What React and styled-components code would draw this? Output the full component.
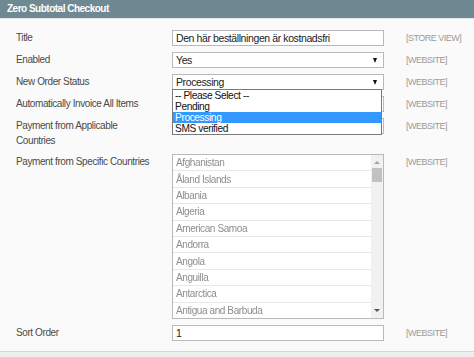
import React from 'react';
import styled, { createGlobalStyle } from 'styled-components';

const GlobalStyle = createGlobalStyle`
    body {
        margin: 0;
        background: #eeeeee;
        font-family: "Liberation Sans", Arial, sans-serif;
    }
`;

const Fieldset = styled.div`
    width: 474px;
    background: #fafafa;
    border-bottom: 1px solid #d6d6d6;
`;

const Header = styled.div`
    height: 18px;
    background: #6f8992;
    border-bottom: 1px solid #e4e8ea;
    color: #fff;
    font-weight: bold;
    font-size: 10px;
    letter-spacing: -0.5px;
    line-height: 18px;
    padding-left: 7px;
`;

const Form = styled.div`
    display: flex;
    flex-direction: column;
    gap: 6px;
    padding: 11px 0 10px 16px;
`;

const Row = styled.div`
    display: grid;
    grid-template-columns: 156px 212px 1fr;
    align-items: start;
`;

const Label = styled.div`
    font-size: 10px;
    letter-spacing: -0.4px;
    line-height: 14.5px;
    padding-top: 1px;
    color: #4a4a4a;
    padding-right: 16px;
`;

const Scope = styled.div`
    font-size: 9px;
    letter-spacing: -0.5px;
    line-height: 16px;
    color: #9a9a9a;
    padding-left: 22px;
`;

const Input = styled.div`
    height: 14px;
    border: 1px solid #b9b9b9;
    background: #fff;
    font-size: 10.5px;
    letter-spacing: -0.4px;
    line-height: 14px;
    padding: 0 3px;
    color: #222;
    white-space: nowrap;
    overflow: hidden;
`;

const SelectBox = styled.div`
    position: relative;
    height: 14px;
    border: 1px solid #b9b9b9;
    background: #fff;
    font-size: 10.5px;
    letter-spacing: -0.4px;
    line-height: 14px;
    padding: 0 3px;
    color: #222;
    display: flex;
    align-items: center;
`;

const Arrow = styled.span`
    width: 0;
    height: 0;
    margin-left: auto;
    border-left: 2.5px solid transparent;
    border-right: 2.5px solid transparent;
    border-top: 5px solid #111;
    margin-right: 3px;
`;

const Dropdown = styled.div`
    position: absolute;
    top: 14px;
    left: -1px;
    right: 1px;
    z-index: 2;
    background: #fff;
    border: 1px solid #7a7a7a;
    display: flex;
    flex-direction: column;
`;

const DropItem = styled.div`
    height: 11px;
    line-height: 11px;
    font-size: 10.2px;
    letter-spacing: -0.4px;
    padding: 0 2px;
    color: ${p => (p.$active ? '#fff' : '#111')};
    background: ${p => (p.$active ? '#3399ff' : 'transparent')};
`;

const MultiSelect = styled.div`
    height: 163px;
    border: 1px solid #b9b9b9;
    background: #fff;
    display: flex;
`;

const OptionList = styled.div`
    flex: 1;
    display: flex;
    flex-direction: column;
`;

const Option = styled.div`
    flex: 1;
    display: flex;
    align-items: center;
    border-bottom: 1px solid #e8e8e8;
    font-size: 10px;
    letter-spacing: -0.4px;
    padding-left: 3px;
    color: #8e8e8e;
    filter: blur(0.55px);

    &:last-child {
        border-bottom: none;
    }
`;

const Scrollbar = styled.div`
    width: 12px;
    background: #f1f1f1;
    display: flex;
    flex-direction: column;
    align-items: center;
    padding: 6px 0 6px;
    box-sizing: border-box;
`;

const ScrollArrow = styled.span`
    width: 0;
    height: 0;
    border-left: 3px solid transparent;
    border-right: 3px solid transparent;
    ${p => (p.$down
        ? 'border-top: 3px solid #555; margin-top: auto;'
        : 'border-bottom: 3px solid #a3a3a3;')}
`;

const Thumb = styled.div`
    width: 10px;
    height: 14px;
    margin-top: 4px;
    background: #c1c1c1;
`;

const countries = [
    'Afghanistan', 'Åland Islands', 'Albania', 'Algeria', 'American Samoa',
    'Andorra', 'Angola', 'Anguilla', 'Antarctica', 'Antigua and Barbuda',
];

const statuses = ['-- Please Select --', 'Pending', 'Processing', 'SMS verified'];

export default function App() {
    return (
        <>
            <GlobalStyle />
            <Fieldset>
                <Header>Zero Subtotal Checkout</Header>
                <Form>
                    <Row>
                        <Label>Title</Label>
                        <Input>Den här beställningen är kostnadsfri</Input>
                        <Scope>[STORE VIEW]</Scope>
                    </Row>
                    <Row>
                        <Label>Enabled</Label>
                        <SelectBox>Yes<Arrow /></SelectBox>
                        <Scope>[WEBSITE]</Scope>
                    </Row>
                    <Row>
                        <Label>New Order Status</Label>
                        <SelectBox>
                            Processing<Arrow />
                            <Dropdown>
                                {statuses.map(s => (
                                    <DropItem key={s} $active={s === 'Processing'}>{s}</DropItem>
                                ))}
                            </Dropdown>
                        </SelectBox>
                        <Scope>[WEBSITE]</Scope>
                    </Row>
                    <Row>
                        <Label>Automatically Invoice All Items</Label>
                        <SelectBox><Arrow /></SelectBox>
                        <Scope>[WEBSITE]</Scope>
                    </Row>
                    <Row>
                        <Label>Payment from Applicable Countries</Label>
                        <SelectBox><Arrow /></SelectBox>
                        <Scope>[WEBSITE]</Scope>
                    </Row>
                    <Row>
                        <Label>Payment from Specific Countries</Label>
                        <MultiSelect>
                            <OptionList>
                                {countries.map(c => <Option key={c}>{c}</Option>)}
                            </OptionList>
                            <Scrollbar>
                                <ScrollArrow />
                                <Thumb />
                                <ScrollArrow $down />
                            </Scrollbar>
                        </MultiSelect>
                        <Scope>[WEBSITE]</Scope>
                    </Row>
                    <Row>
                        <Label>Sort Order</Label>
                        <Input>1</Input>
                        <Scope>[WEBSITE]</Scope>
                    </Row>
                </Form>
            </Fieldset>
        </>
    );
}
